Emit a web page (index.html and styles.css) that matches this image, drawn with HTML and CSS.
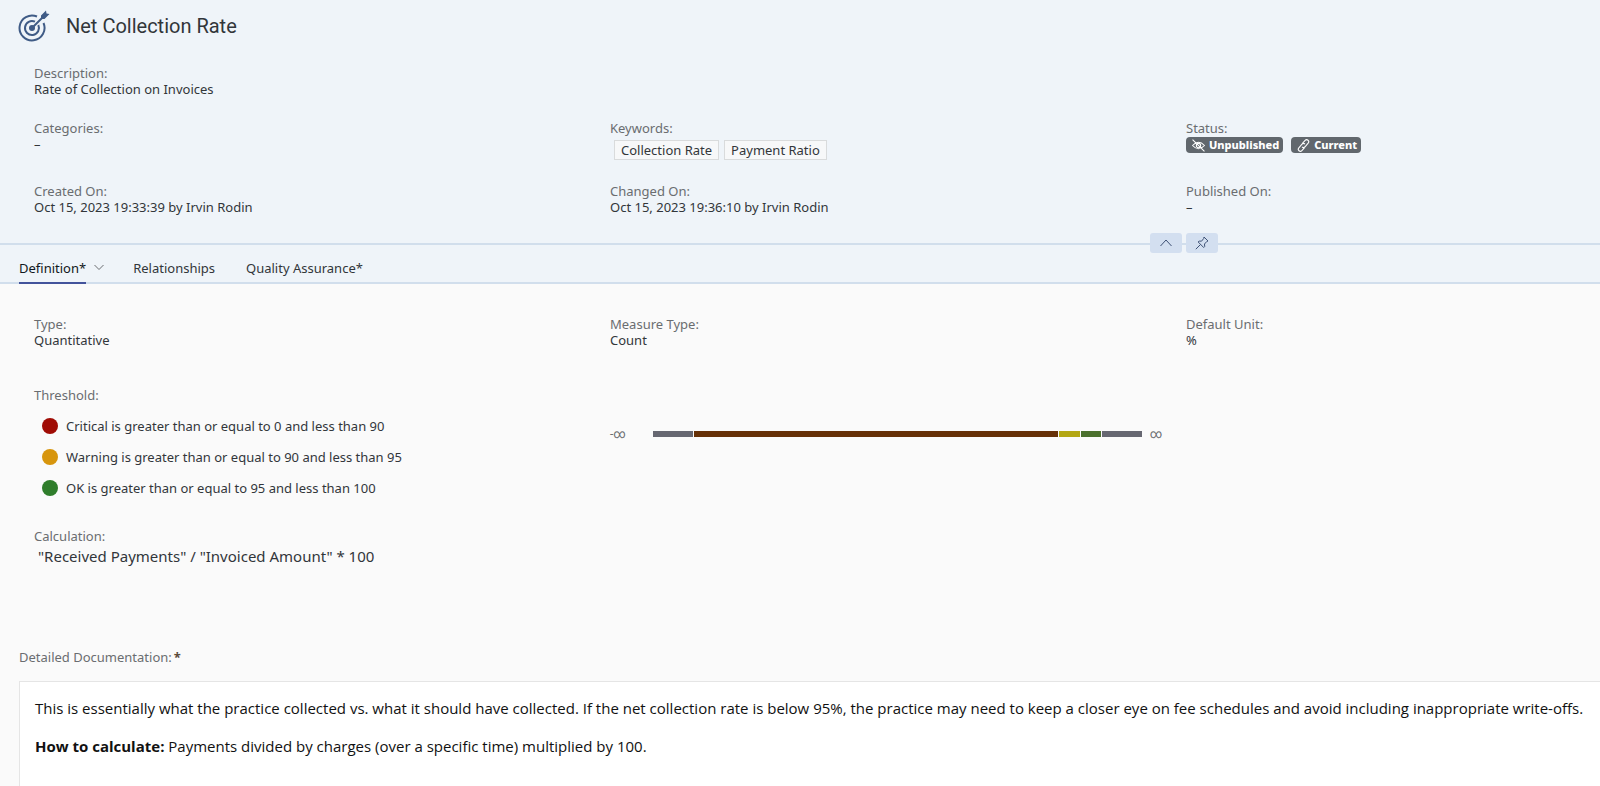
FILE: index.html
```html
<!DOCTYPE html>
<html lang="en">
<head>
    <meta charset="UTF-8">
    <meta name="viewport" content="width=device-width, initial-scale=1.0">
    <title>Net Collection Rate</title>
    <link rel="stylesheet" href="styles.css">
</head>
<body>
    <header class="page-header">
        <div class="title-bar">
            <svg class="title-icon" viewBox="0 0 32 32" aria-hidden="true">
                <path d="M19 6.500A12.500 12.500 0 1 0 25.500 13"/>
                <path d="M17 11.700A7 7 0 1 0 20.300 15"/>
                <circle class="solid" cx="14" cy="18" r="3"/>
                <path d="M14 18L27 5"/>
                <path class="solid" d="M23 9V5.500L28 .5l.5 3 3 .5L26.500 9z"/>
            </svg>
            <h1>Net Collection Rate</h1>
        </div>
        <dl class="grid header-grid">
            <div class="field wide">
                <dt>Description:</dt>
                <dd>Rate of Collection on Invoices</dd>
            </div>
            <div class="field">
                <dt>Categories:</dt>
                <dd>–</dd>
            </div>
            <div class="field">
                <dt>Keywords:</dt>
                <dd class="tags">
                    <span class="tag">Collection Rate</span>
                    <span class="tag">Payment Ratio</span>
                </dd>
            </div>
            <div class="field">
                <dt>Status:</dt>
                <dd class="badges">
                    <span class="badge">
                        <svg viewBox="0 0 12 12" aria-hidden="true"><path d="M.5 6Q6 0 11.500 6Q6 12 .5 6zM.5 .5l11 11"/><circle cx="6" cy="6" r="2"/></svg>
                        Unpublished
                    </span>
                    <span class="badge">
                        <svg viewBox="0 0 12 12" aria-hidden="true"><path d="M5 4l2.500-2.700a1.800 1.800 0 0 1 2.800 2.500L7.200 7.400a1.800 1.800 0 0 1-2.500-.2M7 8l-2.500 2.700a1.800 1.800 0 0 1-2.800-2.500l3.100-3.600a1.800 1.800 0 0 1 2.500.2"/></svg>
                        Current
                    </span>
                </dd>
            </div>
            <div class="field">
                <dt>Created On:</dt>
                <dd>Oct 15, 2023 19:33:39 by Irvin Rodin</dd>
            </div>
            <div class="field">
                <dt>Changed On:</dt>
                <dd>Oct 15, 2023 19:36:10 by Irvin Rodin</dd>
            </div>
            <div class="field">
                <dt>Published On:</dt>
                <dd>–</dd>
            </div>
        </dl>
        <div class="header-actions">
            <button type="button" aria-label="Collapse header">
                <svg viewBox="0 0 14 14"><path d="M1.500 10L7 4l5.500 6"/></svg>
            </button>
            <button type="button" aria-label="Pin header">
                <svg viewBox="0 0 14 14"><path d="M9 1l4 4-1.200.5-2.300 2.500.2 2.500-1 1L3.200 6l1-1 2.300.2L8.700 2.500zM5.500 8.500L.8 13.200"/></svg>
            </button>
        </div>
    </header>

    <nav class="tabs">
        <a class="tab active" href="#definition">Definition*</a>
        <button class="tab-menu" type="button" aria-label="Definition sections">
            <svg viewBox="0 0 10 10"><path d="M.5 3L5 7.500 9.500 3"/></svg>
        </button>
        <a class="tab" href="#relationships">Relationships</a>
        <a class="tab" href="#quality">Quality Assurance*</a>
    </nav>

    <main id="definition">
        <dl class="grid">
            <div class="field">
                <dt>Type:</dt>
                <dd>Quantitative</dd>
            </div>
            <div class="field">
                <dt>Measure Type:</dt>
                <dd>Count</dd>
            </div>
            <div class="field">
                <dt>Default Unit:</dt>
                <dd>%</dd>
            </div>
        </dl>

        <section class="grid threshold">
            <div class="field">
                <h2>Threshold:</h2>
                <ul>
                    <li><span class="dot critical"></span>Critical is greater than or equal to 0 and less than 90</li>
                    <li><span class="dot warning"></span>Warning is greater than or equal to 90 and less than 95</li>
                    <li><span class="dot ok"></span>OK is greater than or equal to 95 and less than 100</li>
                </ul>
            </div>
            <div class="field range">
                <span class="range-min">-∞</span>
                <div class="range-bar">
                    <span class="neutral" style="flex-grow: 40"></span>
                    <span class="critical" style="flex-grow: 364"></span>
                    <span class="warning" style="flex-grow: 21"></span>
                    <span class="ok" style="flex-grow: 20"></span>
                    <span class="neutral" style="flex-grow: 40"></span>
                </div>
                <span>∞</span>
            </div>
        </section>

        <section class="field calculation">
            <h2>Calculation:</h2>
            <p>"Received Payments" / "Invoiced Amount" * 100</p>
        </section>

        <section class="documentation">
            <h2>Detailed Documentation:<span class="required">*</span></h2>
            <div class="document">
                <p>This is essentially what the practice collected vs. what it should have collected. If the net collection rate is below 95%, the practice may need to keep a closer eye on fee schedules and avoid including inappropriate write-offs.</p>
                <p><strong>How to calculate:</strong> Payments divided by charges (over a specific time) multiplied by 100.</p>
            </div>
        </section>
    </main>
</body>
</html>
```
FILE: styles.css
```css
* {
    box-sizing: border-box;
}
html, body {
    height: 100%;
}
body {
    margin: 0;
    display: flex;
    flex-direction: column;
    background: #fafafa;
    color: #32363a;
    font-family: "Noto Sans", Arial, sans-serif;
    font-size: 13px;
    line-height: 16px;
}
h1, h2, p, dl, dd, ul {
    margin: 0;
    padding: 0;
}
h2, dt {
    color: #6a6d70;
    font-size: 13px;
    font-weight: normal;
}
ul {
    list-style: none;
}
svg {
    fill: none;
    stroke: currentColor;
}
button {
    border: none;
    padding: 0;
    cursor: pointer;
}
.page-header {
    position: relative;
    padding-bottom: 28px;
    background: #eff4f9;
    border-bottom: 2px solid #d1deec;
}
.title-bar {
    display: flex;
    align-items: center;
    gap: 16px;
    height: 51px;
    padding-left: 18px;
}
.title-icon {
    width: 32px;
    height: 32px;
    color: #3f5b86;
    stroke-width: 2;
}
.title-icon .solid {
    fill: currentColor;
    stroke: none;
}
h1 {
    font-family: Roboto, Arial, sans-serif;
    font-size: 20px;
    font-weight: normal;
    line-height: 24px;
}
.grid {
    display: grid;
    grid-template-columns: 36% 36% 1fr;
}
.field {
    padding-left: 34px;
}
.header-grid {
    padding-top: 14px;
    grid-template-rows: 55px 63px 32px;
}
.wide {
    grid-column: 1 / -1;
}
.tags {
    display: flex;
    gap: 5px;
    padding: 4px;
}
.tag {
    padding: 0 6px;
    background: #f7f8f9;
    border: 1px solid #d9dbdc;
    line-height: 18px;
    height: 20px;
}
.badges {
    display: flex;
    gap: 8px;
    padding-top: 1px;
}
.badge {
    display: flex;
    align-items: center;
    gap: 4px;
    height: 16px;
    padding: 0 4px 0 6px;
    background: #61676d;
    border-radius: 4px;
    color: #fff;
    font-size: 11px;
    font-weight: 800;
}
.badge svg {
    width: 13px;
    height: 13px;
}
/* sits on the line between header and tabs */
.header-actions {
    position: absolute;
    left: 74%;
    bottom: -10px;
    transform: translateX(-50%);
    display: flex;
    gap: 4px;
}
.header-actions button {
    display: flex;
    align-items: center;
    justify-content: center;
    width: 32px;
    height: 20px;
    background: #d3dff0;
    border-radius: 3px;
    color: #3f5276;
}
.header-actions svg {
    width: 14px;
    height: 14px;
}
.tabs {
    display: flex;
    height: 39px;
    padding-left: 19px;
    background: #eff4f9;
    border-bottom: 2px solid #d1deec;
    flex-shrink: 0;
}
.tab {
    height: 39px;
    margin-right: 31px;
    color: #32363a;
    line-height: 46px;
    text-decoration: none;
}
.tab.active {
    margin-right: 8px;
    color: #111820;
    border-bottom: 2px solid #43539b;
}
.tab-menu {
    width: 10px;
    margin-right: 29px;
    padding-top: 8px;
    background: none;
    color: #6a6d70;
}
.tab-menu svg {
    width: 10px;
    height: 10px;
}
main {
    display: flex;
    flex-direction: column;
    flex-grow: 1;
    padding-top: 32px;
}
.threshold {
    padding-top: 39px;
}
.threshold ul {
    padding: 7px 0 0 8px;
}
.threshold li {
    display: flex;
    align-items: center;
    gap: 8px;
    height: 31px;
}
.dot {
    width: 16px;
    height: 16px;
    border-radius: 50%;
}
.dot.critical {
    background: #a00c05;
}
.dot.warning {
    background: #d7950d;
}
.dot.ok {
    background: #2f7d2b;
}
/* the infinity sign hangs past the column edge */
.range {
    display: flex;
    align-items: center;
    height: 16px;
    margin: 39px -10px 0 0;
    color: #6a6d70;
    font-family: Roboto, Arial, sans-serif;
    font-size: 12px;
}
.range-min {
    width: 43px;
}
.range-bar {
    display: flex;
    flex-grow: 1;
    gap: 1px;
    height: 6px;
    margin-right: 8px;
}
.range-bar .neutral {
    background: #666771;
}
.range-bar .critical {
    background: #663006;
}
.range-bar .warning {
    background: #b3a713;
}
.range-bar .ok {
    background: #4b702d;
}
.calculation {
    padding-top: 25px;
}
.calculation p {
    padding-left: 4px;
    font-size: 15px;
    line-height: 24px;
}
.documentation {
    display: flex;
    flex-direction: column;
    flex-grow: 1;
    padding: 81px 0 0 19px;
}
.required {
    padding-left: 2px;
    color: #5b4b3a;
    font-weight: bold;
}
.document {
    flex-grow: 1;
    margin-top: 16px;
    padding: 15px 8px 0 15px;
    background: #fff;
    border: 1px solid #e5e5e5;
    border-width: 1px 0 0 1px;
    color: #111;
    font-family: "Open Sans", "Noto Sans", sans-serif;
    font-size: 15px;
    line-height: 22px;
}
.document p {
    margin-bottom: 16px;
}
```
